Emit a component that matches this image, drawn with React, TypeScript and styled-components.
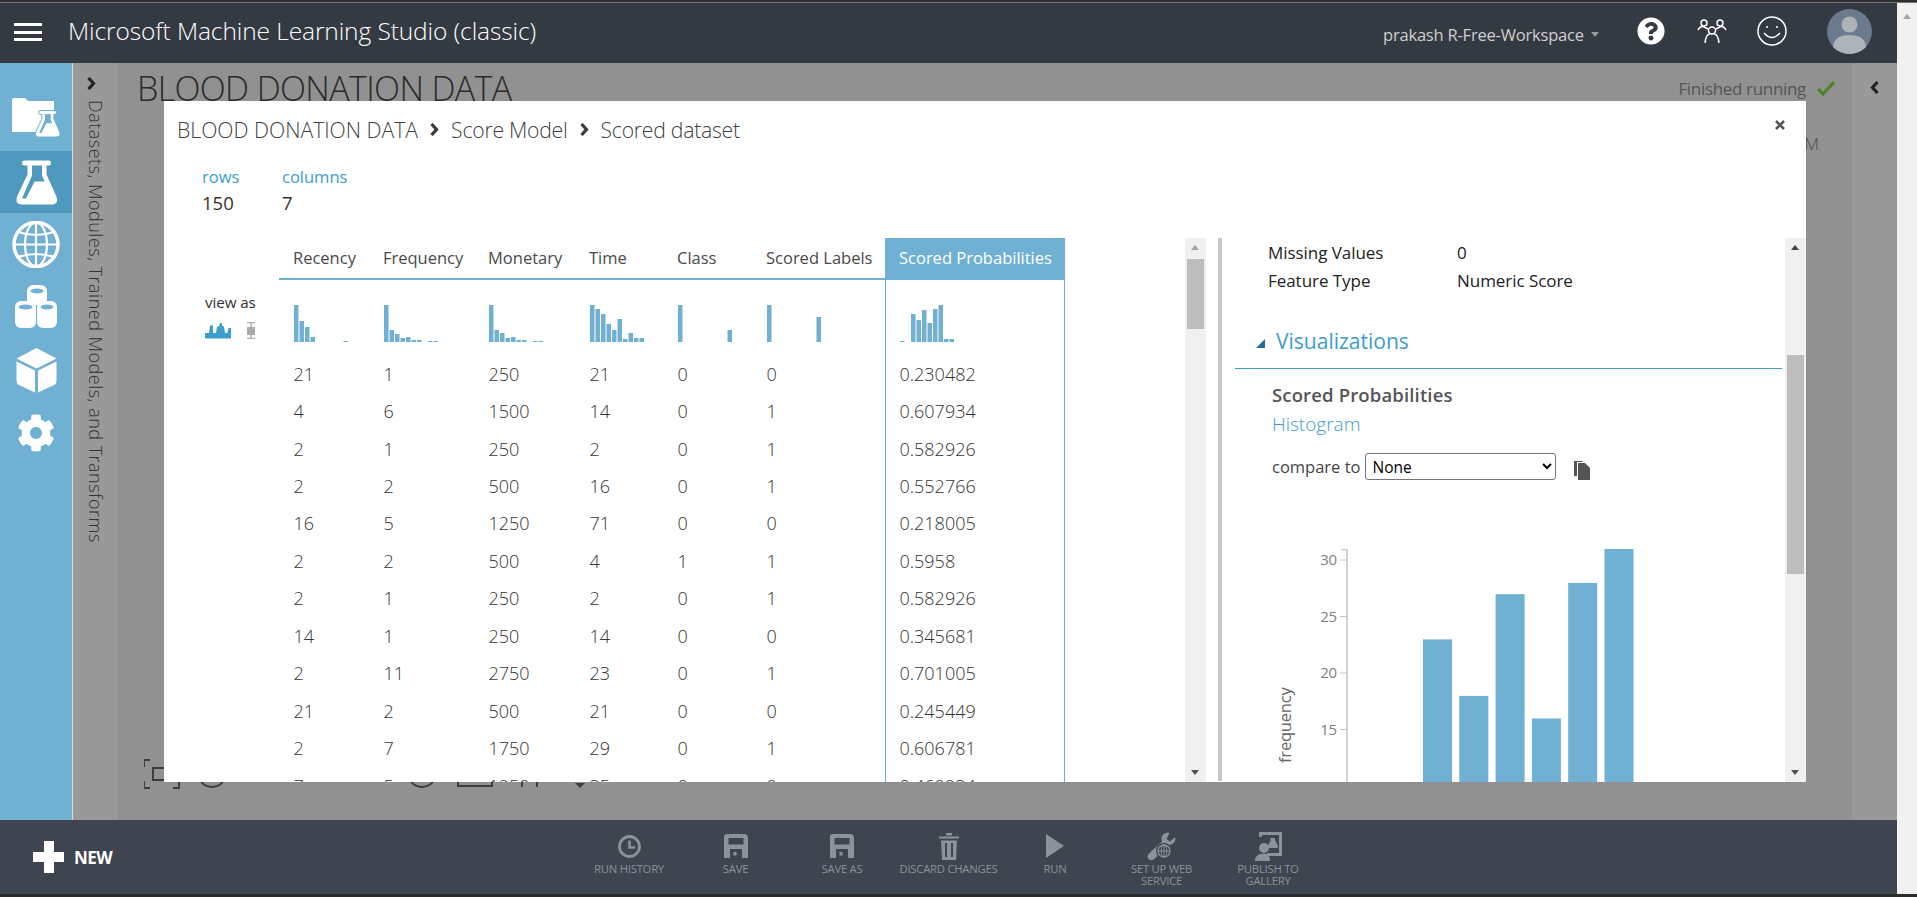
import React from "react";
import styled, { createGlobalStyle } from "styled-components";
import { FaCog, FaQuestionCircle } from "react-icons/fa";

const Global = createGlobalStyle`
  html, body { margin: 0; padding: 0; height: 100%; overflow: hidden; }
  body { font-family: "Open Sans", "Liberation Sans", sans-serif; font-weight: 300; color: #444; background: #2b2b2b; }
  #root { height: 100%; }
`;

const Page = styled.div`
  height: 897px; width: 1917px; display: flex; flex-direction: column; overflow: hidden; position: relative;
`;
const TopEdge = styled.div`
  height: 3px; background: #2f2f2f; border-bottom: 1px solid #777; box-sizing: border-box; flex: none;
`;
const Stage = styled.div`
  flex: 1; display: flex; min-height: 0;
`;
const Main = styled.div`
  width: 1897px; display: flex; flex-direction: column; position: relative;
`;
const BottomEdge = styled.div`
  height: 3px; background: #2a2a2a; flex: none;
`;
const PageScroll = styled.div`
  width: 20px; background: #f1f1f1; display: flex; justify-content: center; padding-top: 11px; box-sizing: border-box;
`;
const Tri = styled.span<{ $down?: boolean; $c?: string }>`
  display: block; width: 0; height: 0; border-left: 4.5px solid transparent; border-right: 4.5px solid transparent;
  ${(p) => (p.$down ? `border-top: 5px solid ${p.$c || "#505050"};` : `border-bottom: 5px solid ${p.$c || "#a3a3a3"};`)}
`;

const Header = styled.header`
  height: 60px; background: #343a42; display: flex; align-items: center; flex: none; color: #fff;
`;
const Burger = styled.div`
  width: 28px; height: 18px; margin-left: 14px; margin-top: -2px;
  display: flex; flex-direction: column; justify-content: space-between;
  span { display: block; height: 3px; background: #fff; }
`;
const AppTitle = styled.div`
  margin-left: 26px; font-size: 24.5px; letter-spacing: -0.1px; line-height: 32px; margin-top: -5px; white-space: nowrap;
`;
const HeaderRight = styled.div`
  margin-left: auto; display: flex; align-items: center; margin-right: 25px; margin-top: -4px;
`;
const Workspace = styled.div`
  font-size: 16.5px; color: #cfcfcf; letter-spacing: -0.2px; font-weight: 400; width: 225px; display: flex; align-items: center; gap: 7px; white-space: nowrap; margin-top: 6px;
`;
const HelpIcon = styled(FaQuestionCircle)`
  width: 28px; height: 28px; color: #fff; margin-left: 29px;
`;
const HeadSvg = styled.svg<{ $ml: number }>`
  margin-left: ${(p) => p.$ml}px; display: block;
`;
const Body = styled.div`
  flex: 1; display: flex; min-height: 0; position: relative;
`;
const Nav = styled.nav`
  width: 72px; background: #70b0d3; border-right: 1px solid #d8d8d8; flex: none; padding-top: 22px; display: flex; flex-direction: column;
`;
const NavItem = styled.div<{ $active?: boolean; $h: number }>`
  height: ${(p) => p.$h}px; display: flex; align-items: center; justify-content: center;
  background: ${(p) => (p.$active ? "#4e99bd" : "transparent")};
`;
const GearIcon = styled(FaCog)`
  width: 38px; height: 38px; color: #fff;
`;
const SidePanel = styled.aside<{ $w: number }>`
  width: ${(p) => p.$w}px; background: #999999; flex: none; display: flex; flex-direction: column; align-items: center; box-sizing: border-box;
`;
const Chevron = styled.svg<{ $mt: number; $ml?: number }>`
  margin-top: ${(p) => p.$mt}px; margin-left: ${(p) => p.$ml || 0}px; display: block; flex: none;
`;
const VerticalLabel = styled.div`
  writing-mode: vertical-rl; font-size: 18px; letter-spacing: 0.49px; color: #333; white-space: nowrap; margin-top: 10px; line-height: 24px; font-weight: 300;
`;
const Canvas = styled.main`
  flex: 1; background: #919191; display: flex; flex-direction: column; padding-bottom: 31px; box-sizing: border-box; min-width: 0;
`;
const CanvasTop = styled.div`
  display: flex; justify-content: space-between; height: 50px;
`;
const CanvasTitle = styled.h1`
  font-size: 34px; line-height: 50px; margin: 0 0 0 19px; font-weight: 300; letter-spacing: -0.65px; color: #2b2b2b; white-space: nowrap;
`;
const Status = styled.div`
  display: flex; align-items: center; gap: 11px; padding-right: 17px; font-size: 17px; letter-spacing: -0.33px; color: #565656; height: 50px; font-weight: 400;
`;
const StampRow = styled.div`
  text-align: right; padding-right: 33px; font-size: 17px; color: #4c4c4c; margin-top: 19px; line-height: 24px;
`;
const CanvasTools = styled.svg`
  margin: auto 0 0 26px; display: block; flex: none;
`;

const Modal = styled.section`
  position: absolute; left: 164px; top: 38px; width: 1642px; height: 681px; background: #fff; display: flex; flex-direction: column; z-index: 2; overflow: hidden;
`;
const ModalHead = styled.div`
  height: 137px; flex: none; position: relative; box-sizing: border-box; padding: 13px 0 0 13px;
`;
const Crumbs = styled.div`
  display: flex; align-items: center; height: 30px; font-size: 21.2px; letter-spacing: 0; color: #404040; gap: 12px; white-space: nowrap;
`;
const CrumbTail = styled.span`
  letter-spacing: -0.25px;
`;
const Close = styled.svg`
  position: absolute; right: 21px; top: 19px;
`;
const Stats = styled.div`
  display: flex; margin: 20px 0 0 25px;
`;
const Stat = styled.div<{ $w: number }>`
  width: ${(p) => p.$w}px;
`;
const StatLabel = styled.div`
  color: #3c9dcf; font-size: 16.5px; line-height: 25px; font-weight: 400;
`;
const StatValue = styled.div`
  font-size: 18.5px; line-height: 26px; margin-top: 1px; color: #333; font-weight: 400;
`;
const ModalBody = styled.div`
  flex: 1; display: flex; min-height: 0;
`;
const LeftPane = styled.div`
  width: 1054px; flex: none; display: flex; padding-left: 40px; box-sizing: border-box; overflow: hidden;
`;
const ViewAs = styled.div`
  width: 75px; flex: none; padding-top: 54px; box-sizing: border-box; font-size: 15.2px; color: #333; line-height: 20px; font-weight: 400; letter-spacing: -0.1px;
  padding-left: 1px;
`;
const ViewIcons = styled.svg`
  display: block; margin-top: 10px;
`;
const DataTable = styled.div`
  width: 786px; flex: none; overflow: hidden; height: 100%;
`;
const cols = "90px 105px 101px 88px 89px 133px 180px";
const HeadRow = styled.div`
  display: grid; grid-template-columns: ${cols}; height: 42px; border-bottom: 2px solid #70b0d3; box-sizing: border-box;
`;
const HeadCell = styled.div<{ $sel?: boolean }>`
  padding-left: 14px; display: flex; align-items: center; height: 39px; font-size: 16.5px; letter-spacing: 0; white-space: nowrap; font-weight: 400;
  ${(p) => (p.$sel ? "background:#70b0d3;color:#fff;height:42px;padding-bottom:3px;box-sizing:border-box;" : "color:#4a4a4a;")}
`;
const Row = styled.div`
  display: grid; grid-template-columns: ${cols}; height: 37.45px;
`;
const HistRow = styled(Row)`
  height: 75px;
`;
const Cell = styled.div<{ $sel?: boolean }>`
  padding-left: 14.5px; display: flex; align-items: center; font-size: 18px; white-space: nowrap; color: #333; box-sizing: border-box;
  ${(p) => (p.$sel ? "border-left:1px solid #70b0d3;border-right:1px solid #70b0d3;padding-left:13.5px;" : "")}
`;
const HistCell = styled(Cell)`
  align-items: flex-start; padding-top: 25px;
`;
const Spacer = styled.div`
  flex: 1;
`;
const VScroll = styled.div<{ $mr?: number }>`
  width: 21px; flex: none; background: #f0f0f0; position: relative; margin-right: ${(p) => p.$mr || 0}px; height: 100%;
`;
const Arrow = styled.div<{ $pos: "top" | "bottom" }>`
  position: absolute; left: 6px; ${(p) => p.$pos}: 7px;
`;
const Thumb = styled.div<{ $t: number; $h: number }>`
  position: absolute; left: 2px; width: 17px; top: ${(p) => p.$t}px; height: ${(p) => p.$h}px; background: #bdbdbd;
`;
const Divider = styled.div`
  width: 4px; background: #c6c6c6; flex: none; height: 543px;
`;
const RightPane = styled.div`
  flex: 1; display: flex; min-width: 0;
`;
const Details = styled.div`
  flex: 1; min-width: 0; overflow: hidden; display: flex; flex-direction: column; padding-top: 1px;
`;
const PropRow = styled.div`
  display: flex; height: 28px; align-items: center; padding-left: 46px; font-size: 17px; color: #222; font-weight: 500; letter-spacing: -0.05px;
`;
const PropName = styled.div`
  width: 189px;
`;
const Section = styled.div`
  margin: 32px 0 0 13px; width: 547px; height: 42px; border-bottom: 1px solid #3c9dcf; display: flex; align-items: center; box-sizing: border-box; padding-left: 21px; gap: 11px;
`;
const SectionTitle = styled.div`
  color: #3c9dcf; font-size: 21px; letter-spacing: 0; font-weight: 400; margin-top: -12px;
`;
const Corner = styled.svg`
  margin-top: -7px;
`;
const VizBlock = styled.div`
  padding: 12.5px 0 0 50px;
`;
const VizTitle = styled.div`
  font-size: 18.5px; font-weight: 600; color: #555; line-height: 28px; letter-spacing: 0.15px; white-space: nowrap;
`;
const VizLink = styled.div`
  font-size: 19px; color: #3c9dcf; line-height: 30px; letter-spacing: 0;
`;
const Compare = styled.div`
  display: flex; align-items: center; margin-top: 14px; font-size: 16.5px; color: #444; letter-spacing: 0; white-space: nowrap; font-weight: 400;
`;
const Select = styled.select`
  width: 191px; height: 27px; margin: 0 0 0 5px; font-family: "Open Sans", sans-serif; font-size: 15.5px; color: #000; background: #fff; border: 1px solid #767676; border-radius: 3px; padding-left: 2px;
`;
const CopySvg = styled.svg`
  margin: 8px 0 0 18px;
`;
const ChartSvg = styled.svg`
  display: block; margin: 69px 0 0 0; flex: none; overflow: hidden;
`;
const ChartText = styled.text<{ $s: number; $c: string }>`
  font-family: "Open Sans", sans-serif; font-size: ${(p) => p.$s}px; fill: ${(p) => p.$c}; font-weight: 400; letter-spacing: -0.2px;
`;

const Footer = styled.footer`
  height: 74px; background: #3e4450; flex: none; display: grid; grid-template-columns: 1fr auto 1fr; position: relative;
`;
const NewBtn = styled.div`
  display: flex; align-items: center; padding-left: 33px; gap: 10px; color: #fff; font-weight: 700; font-size: 17px; letter-spacing: -0.5px;
`;
const Tools = styled.div`
  display: flex;
`;
const Tool = styled.div`
  width: 106.5px; display: flex; flex-direction: column; align-items: center; padding-top: 14px; box-sizing: border-box; color: #8d9199;
`;
const ToolIcon = styled.div`
  height: 24px; display: flex; align-items: center; justify-content: center; margin-bottom: 5px;
`;
const ToolLabel = styled.div`
  font-size: 11.3px; line-height: 12px; text-align: center; font-weight: 400; letter-spacing: -0.25px; white-space: pre-line;
`;

const W = "#ffffff";
const NB = "#70b0d3";

const Flask: React.FC<{ x: number; y: number; s: number; bg: string; outline?: boolean }> = ({ x, y, s, bg, outline }) => (
  <g transform={`translate(${x} ${y}) scale(${s})`}>
    <path
      d="M8 0H32a2.4 2.4 0 0 1 0 5H30V14L39.5 35Q43 44 35 44H6Q-2.500 44 1 35L11 14V5H8a2.400 2.400 0 0 1 0-5Z"
      fill={W}
      stroke={outline ? bg : "none"}
      strokeWidth={outline ? 3.5 : 0}
      paintOrder="stroke"
    />
    <path d="M15.500 5H25.500V15L28 21H18L9.500 38H5.500L15.500 15Z" fill={bg} />
  </g>
);

const FolderIcon = () => (
  <svg width="48" height="40" viewBox="0 0 48 40">
    <path d="M0 2Q0 0 2 0H13L16 3H42V34H0Z" fill={W} />
    <Flask x={24} y={13} s={0.58} bg={NB} outline />
  </svg>
);
const FlaskIcon = () => (
  <svg width="41" height="45" viewBox="0 0 41 45">
    <Flask x={0.5} y={0.5} s={1} bg="#4e99bd" />
  </svg>
);
const GlobeIcon = () => (
  <svg width="48" height="47" viewBox="0 0 48 47" fill="none" stroke={W}>
    <circle cx="24" cy="23.500" r="22" strokeWidth="3.500" />
    <ellipse cx="24" cy="23.500" rx="11" ry="22" strokeWidth="2.200" />
    <path d="M24 2V45M2 23.500H46M6 11Q24 17 42 11M6 36Q24 30 42 36" strokeWidth="2.200" />
  </svg>
);
const Cyl: React.FC<{ x: number; y: number; w: number; h: number }> = ({ x, y, w, h }) => (
  <g>
    <rect x={x} y={y} width={w} height={h} rx={6} fill={W} />
    <ellipse cx={x + w / 2} cy={y + 6} rx={w / 2 - 3.500} ry={2.600} fill={NB} />
  </g>
);
const CylIcon = () => (
  <svg width="42" height="44" viewBox="0 0 42 44">
    <Cyl x={12} y={0} w={20} h={20} />
    <Cyl x={0} y={16} w={21} h={27} />
    <Cyl x={22} y={16} w={20} h={27} />
  </svg>
);
const CubeIcon = () => (
  <svg width="41" height="45" viewBox="0 0 41 45" fill={W}>
    <path d="M20.500 0L40.500 10.500L20.500 20.500L.5 10.500Z" />
    <path d="M.5 13.500L19 22.500V44.500L3 37Q.5 36 .5 33Z" />
    <path d="M40.500 13.500L22 22.500V44.500L38 37Q40.500 36 40.500 33Z" />
  </svg>
);
const Tool1 = () => (
  <svg width="23" height="23" viewBox="0 0 23 23" fill="none" stroke="#8d9199">
    <circle cx="11.500" cy="11.500" r="10" strokeWidth="2.800" />
    <path d="M11.500 5.500V12.500H17" strokeWidth="2.600" />
  </svg>
);
const Save = () => (
  <svg width="24" height="24" viewBox="0 0 24 24" fill="#8d9199">
    <path fillRule="evenodd" d="M3 0H20Q24 0 24 4V24H0V3Q0 0 3 0ZM4.500 4V10.500H19.500V4ZM6 15V24H18V15Z" />
    <rect x="9.500" y="18" width="3" height="3.500" />
  </svg>
);
const Trash = () => (
  <svg width="20" height="27" viewBox="0 0 20 27" fill="#8d9199">
    <rect x="0" y="3.500" width="20" height="2" />
    <rect x="7" y="0" width="6" height="2.500" />
    <path fillRule="evenodd" d="M2 7.500H18L17 27H3ZM6 10V24H8V10ZM12 10V24H14V10Z" />
  </svg>
);
const Play = () => (
  <svg width="18" height="24" viewBox="0 0 18 24" fill="#8d9199"><path d="M0 0L18 12L0 24Z" /></svg>
);
const Wrench = () => (
  <svg width="29" height="29" viewBox="0 0 29 29" fill="#8d9199">
    <path d="M28 5L23 9.500L19.500 7L22.500 1Q17 0 15 4.500Q14 7 15 9.500L2 21.500Q-1 25 2 27.500Q5 29.500 8 26.500L20.500 13Q25 13.500 27.500 10Q29 8 28 5Z" />
    <circle cx="17" cy="19" r="8" fill="#3e4450" />
    <circle cx="17" cy="19" r="6" fill="none" stroke="#8d9199" strokeWidth="1.300" />
    <path d="M17 13V25M11 19H23" stroke="#8d9199" strokeWidth="1" />
    <ellipse cx="17" cy="19" rx="2.800" ry="6" fill="none" stroke="#8d9199" strokeWidth="1" />
  </svg>
);
const Publish = () => (
  <svg width="27" height="29" viewBox="0 0 27 29" fill="#8d9199">
    <path fillRule="evenodd" d="M4 0H27V24H24V3H7V5H4Z" />
    <path d="M12 24H27V21H12Z" />
    <circle cx="9" cy="16" r="5" />
    <path d="M0 29Q0 21.500 9 21.500Q15 21.500 15 29Z" />
    <path d="M15 6H20V8L23 14Q23.500 16 21.500 16H14Q12 16 12.500 14L16 8Z" />
  </svg>
);

const headers = ["Recency", "Frequency", "Monetary", "Time", "Class", "Scored Labels", "Scored Probabilities"];
const hists: number[][] = [
  [37, 21, 15, 5, 0, 0, 0, 0, 0, 1],
  [37, 12, 8, 4, 5, 2, 2, 0, 1, 1],
  [37, 12, 9, 4, 5, 2, 2, 0, 1, 1],
  [37, 33, 28, 18, 12, 23, 3, 9, 4, 4],
  [37, 0, 0, 0, 0, 0, 0, 0, 0, 12],
  [37, 0, 0, 0, 0, 0, 0, 0, 0, 25],
  [1, 0, 28, 22, 32, 19, 33, 37, 3, 3],
];
const rows: (string | number)[][] = [
  [21, 1, 250, 21, 0, 0, "0.230482"],
  [4, 6, 1500, 14, 0, 1, "0.607934"],
  [2, 1, 250, 2, 0, 1, "0.582926"],
  [2, 2, 500, 16, 0, 1, "0.552766"],
  [16, 5, 1250, 71, 0, 0, "0.218005"],
  [2, 2, 500, 4, 1, 1, "0.5958"],
  [2, 1, 250, 2, 0, 1, "0.582926"],
  [14, 1, 250, 14, 0, 0, "0.345681"],
  [2, 11, 2750, 23, 0, 1, "0.701005"],
  [21, 2, 500, 21, 0, 0, "0.245449"],
  [2, 7, 1750, 29, 0, 1, "0.606781"],
  [7, 5, 1250, 35, 0, 0, "0.460934"],
];

const Hist: React.FC<{ d: number[] }> = ({ d }) => (
  <svg width="56" height="37" viewBox="0 0 56 37" fill="#70b0d3">
    {d.map((h, i) => (h > 0 ? <rect key={i} x={i * 5.5} y={37 - h} width={4.500} height={h} /> : null))}
  </svg>
);

const CrumbSep = () => (
  <svg width="9" height="13" viewBox="0 0 9 13" fill="none" stroke="#3a3a3a" strokeWidth="3.200">
    <path d="M1.500 1L6.500 6.500L1.500 12" />
  </svg>
);

const bars = [23, 18, 27, 16, 28, 31];
const ChartTicks = [30, 25, 20, 15];

export default function App() {
  return (
    <Page>
      <Global />
      <TopEdge />
      <Stage>
        <Main>
          <Header>
            <Burger><span /><span /><span /></Burger>
            <AppTitle>Microsoft Machine Learning Studio (classic)</AppTitle>
            <HeaderRight>
              <Workspace>
                prakash R-Free-Workspace
                <Tri $down $c="#9a9a9a" />
              </Workspace>
              <HelpIcon />
              <HeadSvg $ml={32} width="30" height="25" viewBox="0 0 30 25" fill="none" stroke="#fff" strokeWidth="1.500">
                <circle cx="7" cy="4" r="3" />
                <circle cx="23" cy="4" r="3" />
                <circle cx="15" cy="11.500" r="3.500" />
                <path d="M1 11Q3 7 6 7.500L11 10M29 11Q27 7 24 7.500L19 10M8 24Q9 15 13 15M22 24Q21 15 17 15" />
              </HeadSvg>
              <HeadSvg $ml={30} width="30" height="30" viewBox="0 0 30 30" fill="none" stroke="#fff" strokeWidth="1.500">
                <circle cx="15" cy="15" r="14" />
                <circle cx="10" cy="11" r="1" fill="#fff" stroke="none" />
                <circle cx="20" cy="11" r="1" fill="#fff" stroke="none" />
                <path d="M7 17Q15 26 23 17" />
              </HeadSvg>
              <HeadSvg $ml={40} width="45" height="45" viewBox="0 0 45 45">
                <circle cx="22.500" cy="22.500" r="22.500" fill="#6b7a8c" />
                <circle cx="22.500" cy="15.500" r="8" fill="#aeb3ba" />
                <path d="M6 38Q7 26 22.500 26Q38 26 39 38Q32 45 22.500 45Q13 45 6 38Z" fill="#aeb3ba" />
              </HeadSvg>
            </HeaderRight>
          </Header>
          <Body>
            <Nav>
              <NavItem $h={66}><FolderIcon /></NavItem>
              <NavItem $h={62} $active><FlaskIcon /></NavItem>
              <NavItem $h={62}><GlobeIcon /></NavItem>
              <NavItem $h={63}><CylIcon /></NavItem>
              <NavItem $h={65}><CubeIcon /></NavItem>
              <NavItem $h={60}><GearIcon /></NavItem>
            </Nav>
            <SidePanel $w={45}>
              <Chevron $mt={14} $ml={-9} width="9" height="13" viewBox="0 0 9 13" fill="none" stroke="#222" strokeWidth="3.200">
                <path d="M1.500 1L6.500 6.500L1.500 12" />
              </Chevron>
              <VerticalLabel>Datasets, Modules, Trained Models, and Transforms</VerticalLabel>
            </SidePanel>
            <Canvas>
              <CanvasTop>
                <CanvasTitle>BLOOD DONATION DATA</CanvasTitle>
                <Status>
                  Finished running
                  <svg width="18" height="15" viewBox="0 0 18 15" fill="none" stroke="#4e7f22" strokeWidth="3"><path d="M1 8L6 13L17 1" /></svg>
                </Status>
              </CanvasTop>
              <StampRow>AM</StampRow>
              <CanvasTools width="450" height="30" viewBox="0 0 450 30" fill="none" stroke="#3d3d3d" strokeWidth="2">
                <path d="M0 8V1H6M35 8V1H29M0 22V29H6M35 22V29H29" />
                <rect x="9" y="9" width="16" height="12" />
                <circle cx="68" cy="14" r="14" />
                <circle cx="278" cy="14" r="14" />
                <rect x="314" y="4" width="34" height="23" />
                <path d="M378 20V28M393 20V28" />
                <path d="M431 24H441L436 29Z" fill="#3d3d3d" stroke="none" />
              </CanvasTools>
            </Canvas>
            <SidePanel $w={45}>
              <Chevron $mt={18} width="9" height="13" viewBox="0 0 9 13" fill="none" stroke="#222" strokeWidth="3.200">
                <path d="M7.500 1L2.500 6.500L7.500 12" />
              </Chevron>
            </SidePanel>
            <Modal>
              <ModalHead>
                <Crumbs>
                  BLOOD DONATION DATA
                  <CrumbSep />
                  <CrumbTail>Score Model</CrumbTail>
                  <CrumbSep />
                  <CrumbTail>Scored dataset</CrumbTail>
                </Crumbs>
                <Close width="10" height="10" viewBox="0 0 10 10" stroke="#555" strokeWidth="2.600">
                  <path d="M1 1L9 9M9 1L1 9" />
                </Close>
                <Stats>
                  <Stat $w={80}>
                    <StatLabel>rows</StatLabel>
                    <StatValue>150</StatValue>
                  </Stat>
                  <Stat $w={80}>
                    <StatLabel>columns</StatLabel>
                    <StatValue>7</StatValue>
                  </Stat>
                </Stats>
              </ModalHead>
              <ModalBody>
                <LeftPane>
                  <ViewAs>
                    view as
                    <ViewIcons width="54" height="17" viewBox="0 0 54 17">
                      <path d="M0 16.500V11H4L5 3.500H8V11H11L12 4.500H14L15 1H17V4H18L19 5L20 11H22.500L23.500 6H26V16.500Z" fill="#3c9dcf" />
                      <path d="M42 .5H50M46 .5V16.500M42 16.500H50" stroke="#b0b0b0" strokeWidth="1.500" fill="none" />
                      <rect x="42" y="5" width="8" height="8" fill="#aaa" />
                    </ViewIcons>
                  </ViewAs>
                  <DataTable>
                    <HeadRow>
                      {headers.map((h, i) => (
                        <HeadCell key={h} $sel={i === 6}>{h}</HeadCell>
                      ))}
                    </HeadRow>
                    <HistRow>
                      {hists.map((d, i) => (
                        <HistCell key={i} $sel={i === 6}><Hist d={d} /></HistCell>
                      ))}
                    </HistRow>
                    {rows.map((r, ri) => (
                      <Row key={ri}>
                        {r.map((v, ci) => (
                          <Cell key={ci} $sel={ci === 6}>{v}</Cell>
                        ))}
                      </Row>
                    ))}
                  </DataTable>
                  <Spacer />
                  <VScroll $mr={12}>
                    <Arrow $pos="top"><Tri /></Arrow>
                    <Thumb $t={21} $h={70} />
                    <Arrow $pos="bottom"><Tri $down /></Arrow>
                  </VScroll>
                </LeftPane>
                <Divider />
                <RightPane>
                  <Details>
                    <PropRow>
                      <PropName>Missing Values</PropName>0
                    </PropRow>
                    <PropRow>
                      <PropName>Feature Type</PropName>Numeric Score
                    </PropRow>
                    <Section>
                      <Corner width="9" height="9" viewBox="0 0 9 9"><path d="M9 0V9H0Z" fill="#1f6f96" /></Corner>
                      <SectionTitle>Visualizations</SectionTitle>
                    </Section>
                    <VizBlock>
                      <VizTitle>Scored Probabilities</VizTitle>
                      <VizLink>Histogram</VizLink>
                      <Compare>
                        compare to
                        <Select defaultValue="None"><option>None</option></Select>
                        <CopySvg width="16" height="19" viewBox="0 0 16 19" fill="#555">
                          <path d="M0 0H8L9 1H3V15H0Z" />
                          <path d="M4 2H11L16 7V19H4Z" />
                        </CopySvg>
                      </Compare>
                    </VizBlock>
                    <ChartSvg width="563" height="233" viewBox="0 0 563 233">
                      <path d="M125 .5H119M125 0V233" stroke="#c4c4c4" strokeWidth="1.500" fill="none" />
                      {ChartTicks.map((t, i) => {
                        const y = 11 + i * 56.5;
                        return (
                          <g key={t}>
                            <path d={`M118 ${y}H125`} stroke="#c4c4c4" />
                            <ChartText $s={15} $c="#808080" x={115} y={y + 5} textAnchor="end">{t}</ChartText>
                          </g>
                        );
                      })}
                      <ChartText $s={16.5} $c="#666" transform="translate(69 214) rotate(-90)">frequency</ChartText>
                      {bars.map((b, i) => (
                        <rect key={i} x={201 + i * 36.3} y={(31 - b) * 11.3} width={29} height={240} fill="#70b0d3" />
                      ))}
                    </ChartSvg>
                  </Details>
                  <VScroll>
                    <Arrow $pos="top"><Tri $c="#444" /></Arrow>
                    <Thumb $t={117} $h={219} />
                    <Arrow $pos="bottom"><Tri $down /></Arrow>
                  </VScroll>
                </RightPane>
              </ModalBody>
            </Modal>
          </Body>
          <Footer>
            <NewBtn>
              <svg width="31" height="32" viewBox="0 0 31 32" fill="#fff"><path d="M11 0H21V11H31V21H21V32H11V21H0V11H11Z" /></svg>
              NEW
            </NewBtn>
            <Tools>
              <Tool><ToolIcon><Tool1 /></ToolIcon><ToolLabel>RUN HISTORY</ToolLabel></Tool>
              <Tool><ToolIcon><Save /></ToolIcon><ToolLabel>SAVE</ToolLabel></Tool>
              <Tool><ToolIcon><Save /></ToolIcon><ToolLabel>SAVE AS</ToolLabel></Tool>
              <Tool><ToolIcon><Trash /></ToolIcon><ToolLabel>DISCARD CHANGES</ToolLabel></Tool>
              <Tool><ToolIcon><Play /></ToolIcon><ToolLabel>RUN</ToolLabel></Tool>
              <Tool><ToolIcon><Wrench /></ToolIcon><ToolLabel>{"SET UP WEB\nSERVICE"}</ToolLabel></Tool>
              <Tool><ToolIcon><Publish /></ToolIcon><ToolLabel>{"PUBLISH TO\nGALLERY"}</ToolLabel></Tool>
            </Tools>
            <div />
          </Footer>
        </Main>
        <PageScroll><Tri /></PageScroll>
      </Stage>
      <BottomEdge />
    </Page>
  );
}
